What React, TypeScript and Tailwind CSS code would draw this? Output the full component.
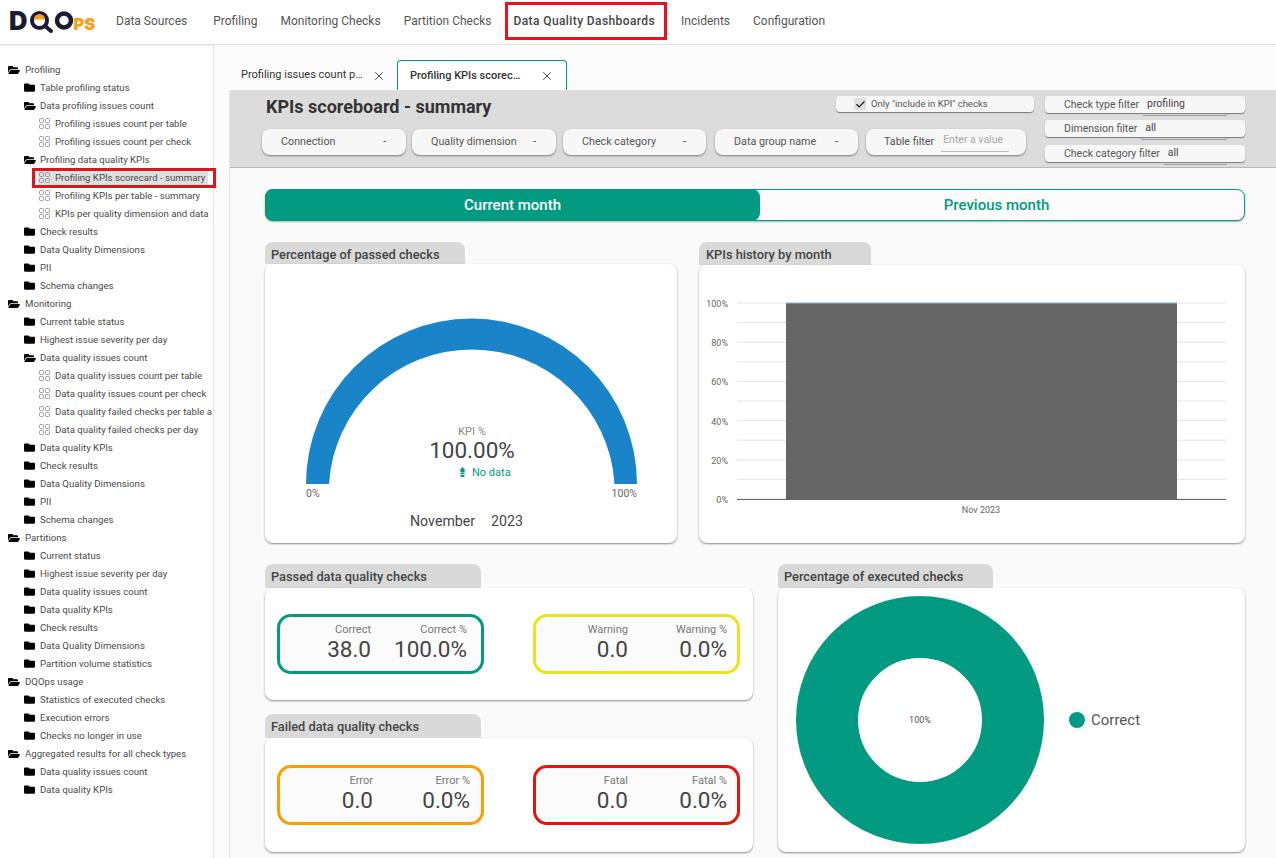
import { FaFolder, FaFolderOpen } from "react-icons/fa";
import { X, Check } from "lucide-react";

type Row = { label: string; level: 0 | 1 | 2; open?: boolean; active?: boolean };

const tree: Row[] = [
  { label: "Profiling", level: 0, open: true },
  { label: "Table profiling status", level: 1 },
  { label: "Data profiling issues count", level: 1, open: true },
  { label: "Profiling issues count per table", level: 2 },
  { label: "Profiling issues count per check", level: 2 },
  { label: "Profiling data quality KPIs", level: 1, open: true },
  { label: "Profiling KPIs scorecard - summary", level: 2, active: true },
  { label: "Profiling KPIs per table - summary", level: 2 },
  { label: "KPIs per quality dimension and data", level: 2 },
  { label: "Check results", level: 1 },
  { label: "Data Quality Dimensions", level: 1 },
  { label: "PII", level: 1 },
  { label: "Schema changes", level: 1 },
  { label: "Monitoring", level: 0, open: true },
  { label: "Current table status", level: 1 },
  { label: "Highest issue severity per day", level: 1 },
  { label: "Data quality issues count", level: 1, open: true },
  { label: "Data quality issues count per table", level: 2 },
  { label: "Data quality issues count per check", level: 2 },
  { label: "Data quality failed checks per table a", level: 2 },
  { label: "Data quality failed checks per day", level: 2 },
  { label: "Data quality KPIs", level: 1 },
  { label: "Check results", level: 1 },
  { label: "Data Quality Dimensions", level: 1 },
  { label: "PII", level: 1 },
  { label: "Schema changes", level: 1 },
  { label: "Partitions", level: 0, open: true },
  { label: "Current status", level: 1 },
  { label: "Highest issue severity per day", level: 1 },
  { label: "Data quality issues count", level: 1 },
  { label: "Data quality KPIs", level: 1 },
  { label: "Check results", level: 1 },
  { label: "Data Quality Dimensions", level: 1 },
  { label: "Partition volume statistics", level: 1 },
  { label: "DQOps usage", level: 0, open: true },
  { label: "Statistics of executed checks", level: 1 },
  { label: "Execution errors", level: 1 },
  { label: "Checks no longer in use", level: 1 },
  { label: "Aggregated results for all check types", level: 0, open: true },
  { label: "Data quality issues count", level: 1 },
  { label: "Data quality KPIs", level: 1 },
];

const navItems = [
  { label: "Data Sources", margin: "mr-[2px]" },
  { label: "Profiling", margin: "-mr-px" },
  { label: "Monitoring Checks", margin: "-mr-px" },
  { label: "Partition Checks", margin: "-mr-[3px]" },
  { label: "Data Quality Dashboards", margin: "", active: true },
  { label: "Incidents", margin: "-mr-px" },
  { label: "Configuration", margin: "" },
];

function Logo() {
  return (
    <svg width="90" height="32" viewBox="0 0 90 32" className="shrink-0">
      <text x="0" y="23.500" fontFamily="Inter, sans-serif" fontWeight="900" fontSize="25.500" fill="#1c1c30">D</text>
      <circle cx="30.500" cy="14.500" r="7.500" fill="#fff" stroke="#1c1c30" strokeWidth="4" />
      <path d="M25 13.500 a5.500 5.500 0 0 1 11 0 z" fill="#f9a01b" />
      <path d="M36 20 l6 5" stroke="#1c1c30" strokeWidth="4" strokeLinecap="round" />
      <circle cx="55" cy="14.500" r="7" fill="none" stroke="#1c1c30" strokeWidth="4.500" />
      <text x="64.500" y="24" fontFamily="Inter, sans-serif" fontWeight="900" fontSize="16.500" fill="#f9a01b">PS</text>
    </svg>
  );
}

function GridIcon() {
  return (
    <svg width="11" height="11" viewBox="0 0 11 11" className="shrink-0" fill="none" stroke="#8f8f8f" strokeWidth="0.9">
      <rect x="0.5" y="0.5" width="4" height="4" rx="1" />
      <rect x="6.5" y="0.5" width="4" height="4" rx="1" />
      <rect x="0.5" y="6.5" width="4" height="4" rx="1" />
      <rect x="6.5" y="6.5" width="4" height="4" rx="1" />
    </svg>
  );
}

function TreeRow({ row }: { row: Row }) {
  const indent = row.level === 0 ? "pl-2" : row.level === 1 ? "pl-6" : "pl-[39px]";
  return (
    <div className={`relative h-[18px] flex items-center whitespace-nowrap ${indent}`}>
      {row.active && <div className="absolute left-[38px] right-[5px] top-[1px] bottom-[1px] bg-[#e0e0e0]" />}
      <div className={`relative flex items-center ${row.level === 1 ? "gap-1" : "gap-[5px]"}`}>
        {row.level === 2 ? (
          <GridIcon />
        ) : row.open ? (
          <FaFolderOpen className="shrink-0 text-[12px] text-black" />
        ) : (
          <span className="w-[12px] shrink-0">
            <FaFolder className="text-[11px] text-black" />
          </span>
        )}
        <span className="text-[9.65px] text-[#4a4a4a]">{row.label}</span>
      </div>
      {row.active && <div className="absolute left-[32px] -right-[3px] -top-[1px] -bottom-[1px] z-10 border-[3px] border-[#e0131f]" />}
    </div>
  );
}

function Pill({ label, w }: { label: string; w: string }) {
  return (
    <div className={`${w} h-[26px] rounded-lg bg-[#f7f7f7] shadow-[0_1px_2px_rgba(0,0,0,0.45)] flex items-center justify-between pl-[19px] pr-[20px] text-[10.75px] text-[#555]`}>
      <span>{label}</span>
      <span className="text-[#333] text-[10px] leading-none">-</span>
    </div>
  );
}

function SmallFilter({ label, value }: { label: string; value: string }) {
  return (
    <div className="w-[200px] h-[17px] rounded-[4px] bg-[#f7f7f7] shadow-[0_1px_1px_rgba(0,0,0,0.45)] flex items-center pl-[19px] pr-[18px] text-[10.5px] text-[#555] whitespace-nowrap">
      <span>{label}</span>
      <span className="relative flex-1 self-stretch ml-1 pl-1 flex items-center -mt-px text-[#444]">
        {value}
        <span className="absolute left-0 right-0 -bottom-[3px] h-px bg-[#a0a0a0]" />
      </span>
    </div>
  );
}

function Label({ text, w, h, pad }: { text: string; w: string; h: string; pad: string }) {
  return (
    <div className={`${w} ${h} ${pad} rounded-t-lg bg-[#d9d9d9] flex items-center text-[12.8px] font-medium text-[#444] whitespace-nowrap`}>
      {text}
    </div>
  );
}

function Gauge() {
  return (
    <svg width="412" height="279" viewBox="0 0 412 279" className="block">
      <path d="M41 220 A165.5 165.5 0 0 1 372 220 L349.5 220 A143 143 0 0 0 64 220 Z" fill="#1a84c8" />
      <text x="207" y="171" textAnchor="middle" fontSize="11" fill="#888">KPI %</text>
      <text x="207" y="194" textAnchor="middle" fontSize="22.5" fill="#444">100.00%</text>
      <path d="M197.500 203 l3 3.500 h-1 v1.500 h-4 v-1.500 h-1 z M195.500 208.500 h4 v1.700 h-4 z M195.500 211 h4 v2 h-4 z" fill="#029a80" />
      <text x="207" y="212" fontSize="11" fill="#029a80">No data</text>
      <text x="41" y="233" fontSize="10.5" fill="#666">0%</text>
      <text x="372" y="233" textAnchor="end" fontSize="10.5" fill="#666">100%</text>
      <text y="262" fontSize="14.2" fill="#444">
        <tspan x="145">November</tspan>
        <tspan x="226">2023</tspan>
      </text>
    </svg>
  );
}

function History() {
  const ticks = [0, 20, 40, 60, 80, 100];
  const lines = [0, 1, 2, 3, 4, 5, 6, 7, 8, 9, 10];
  return (
    <svg width="546" height="278" viewBox="0 0 546 278" className="block">
      {lines.map((i) => (
        <line key={i} x1="38" x2="527" y1={38 + i * 19.6} y2={38 + i * 19.6} stroke="#e3e3e3" strokeWidth="1" />
      ))}
      <rect x="87" y="38" width="391" height="196" fill="#666666" />
      <line x1="87" x2="478" y1="38" y2="38" stroke="#7fc4d4" strokeWidth="1" />
      <line x1="38" x2="527" y1="234.500" y2="234.500" stroke="#666" strokeWidth="1" />
      {ticks.map((t, i) => (
        <text key={t} x="29" y={238 - i * 39.2} textAnchor="end" fontSize="9" fill="#666">{t}%</text>
      ))}
      <text x="282" y="248" textAnchor="middle" fontSize="9" fill="#666">Nov 2023</text>
    </svg>
  );
}

function Donut() {
  return (
    <svg width="248" height="248" viewBox="0 0 248 248" className="block shrink-0">
      <circle cx="124" cy="124" r="93" fill="none" stroke="#029a80" strokeWidth="62" />
      <text x="124" y="127" textAnchor="middle" fontSize="9" fill="#555">100%</text>
    </svg>
  );
}

type StatProps = { border: string; name: string; value: string; percent: string; col1: string; col2: string };

function Stat({ border, name, value, percent, col1, col2 }: StatProps) {
  return (
    <div className={`w-[207px] h-[60px] rounded-[14px] border-[3px] bg-[#fbfbfb] flex items-start pt-[6px] ${border}`}>
      <div className={`${col1} text-right`}>
        <div className="text-[11px] leading-[13px] text-[#777]">{name}</div>
        <div className="text-[22.5px] leading-[27px] text-[#444]">{value}</div>
      </div>
      <div className={`${col2} text-right`}>
        <div className="text-[11px] leading-[13px] text-[#777]">{name} %</div>
        <div className="text-[22.5px] leading-[27px] text-[#444]">{percent}</div>
      </div>
    </div>
  );
}

export default function App() {
  return (
    <div className="h-screen overflow-hidden bg-white font-['Roboto',sans-serif]">
      <header className="h-[45px] flex items-center border-b border-[#e2e2e2] shadow-[0_1px_2px_rgba(0,0,0,0.08)]">
        <div className="pl-[9px] w-[108px]">
          <Logo />
        </div>
        <nav className="flex items-center gap-2 -mt-[3px]">
          {navItems.map((item) =>
            item.active ? (
              <div key={item.label} className="h-[38px] pl-[6px] pr-[9px] -mr-[2px] flex items-center border-[3px] border-[#e8131f] text-[12px] font-medium text-[#444] tracking-[0.4px]">
                {item.label}
              </div>
            ) : (
              <div key={item.label} className={`px-2 text-[12px] text-[#555] ${item.margin}`}>
                {item.label}
              </div>
            )
          )}
        </nav>
      </header>

      <div className="flex h-[813px]">
        <aside className="w-[214px] shrink-0 border-r border-[#e2e2e2] pt-4">
          {tree.map((row, i) => (
            <TreeRow key={i} row={row} />
          ))}
        </aside>

        <main className="flex-1 min-w-0 flex flex-col bg-[#fcfcfc] pt-[15px]">
          <div className="h-[30px] flex items-stretch pl-[15px]">
            <div className="w-[168px] flex items-center pl-3 pt-px text-[11px] text-[#333]">
              <span className="w-[118px] whitespace-nowrap">Profiling issues count p…</span>
              <X size={14} strokeWidth={1.5} className="ml-[13px] text-[#333]" />
            </div>
            <div className="w-[170px] flex items-center pl-3 pt-px rounded-t border border-b-0 border-[#029a80] bg-white text-[11px] font-medium text-[#333]">
              <span className="w-[117px] whitespace-nowrap">Profiling KPIs scorec…</span>
              <X size={14} strokeWidth={1.5} className="ml-[13px] text-[#333]" />
            </div>
          </div>

          <div className="flex-1 ml-[15px] border-l border-[#e6e6e6] bg-[#fafafa]">
            <div className="h-[78px] bg-[#dcdcdc] border-b border-[#b8b8b8] flex pl-[32px] pr-[31px]">
              <div className="w-[771px]">
                <div className="h-[39px] pt-[6px] flex">
                  <h1 className="pl-1 text-[18px] leading-[22px] font-bold text-[#333]">KPIs scoreboard - summary</h1>
                  <div className="ml-auto mr-[-1px] w-[198px] h-[16px] rounded-[4px] bg-[#f7f7f7] shadow-[0_1px_1px_rgba(0,0,0,0.45)] flex items-center pl-[18px] gap-[5px] text-[9.5px] text-[#555]">
                    <span className="w-[12px] h-[12px] bg-[#e0e0e0] flex items-center justify-center">
                      <Check size={11} strokeWidth={2.5} className="text-[#111]" />
                    </span>
                    Only "include in KPI" checks
                  </div>
                </div>
                <div className="flex">
                  <Pill label="Connection" w="w-[144px]" />
                  <Pill label="Quality dimension" w="w-[144px] ml-[6px]" />
                  <Pill label="Check category" w="w-[143px] ml-[7px]" />
                  <Pill label="Data group name" w="w-[143px] ml-[9px]" />
                  <div className="w-[160px] ml-2 h-[26px] rounded-lg bg-[#f7f7f7] shadow-[0_1px_2px_rgba(0,0,0,0.45)] flex items-center pl-[18px] text-[10.75px] text-[#555]">
                    <span>Table filter</span>
                    <span className="ml-[7px] w-[68px] pb-[3px] border-b border-[#bbb] text-[#aaa] text-[10.5px] pl-[2px] whitespace-nowrap">Enter a value</span>
                  </div>
                </div>
              </div>
              <div className="ml-auto pt-[6px] flex flex-col">
                <SmallFilter label="Check type filter" value="profiling" />
                <div className="h-[7px]" />
                <SmallFilter label="Dimension filter" value="all" />
                <div className="h-2" />
                <SmallFilter label="Check category filter" value="all" />
              </div>
            </div>

            <div className="pl-[35px] pr-[31px] pt-[21px]">
              <div className="h-[32px] flex rounded-lg border border-[#029a80] bg-[#fbfbfb] shadow-[0_1px_2px_rgba(0,0,0,0.3)] text-[15px] font-medium">
                <div className="w-[495px] -m-px rounded-lg bg-[#029a80] text-white flex items-center justify-center">Current month</div>
                <div className="flex-1 pr-[10px] text-[#029a80] flex items-center justify-center">Previous month</div>
              </div>

              <div className="mt-[21px] flex gap-[22px]">
                <div className="w-[412px]">
                  <Label text="Percentage of passed checks" w="w-[200px]" h="h-[22px] pt-[3px]" pad="px-[6px]" />
                  <div className="h-[279px] rounded-lg bg-white shadow-[0_1px_2px_rgba(0,0,0,0.45)]">
                    <Gauge />
                  </div>
                </div>
                <div className="w-[546px]">
                  <Label text="KPIs history by month" w="w-[172px]" h="h-[23px] pt-[2px]" pad="px-[7px]" />
                  <div className="h-[278px] rounded-lg bg-white shadow-[0_1px_2px_rgba(0,0,0,0.45)]">
                    <History />
                  </div>
                </div>
              </div>

              <div className="mt-[21px] flex gap-[25px]">
                <div className="w-[488px]">
                  <Label text="Passed data quality checks" w="w-[216px]" h="h-[24px] pt-[2px]" pad="px-[6px]" />
                  <div className="h-[112px] rounded-lg bg-white shadow-[0_1px_2px_rgba(0,0,0,0.45)] pl-3 pr-[13px] pt-[26px] flex justify-between">
                    <Stat border="border-[#029a80]" name="Correct" value="38.0" percent="100.0%" col1="w-[91px]" col2="w-[96px]" />
                    <Stat border="border-[#ede21b]" name="Warning" value="0.0" percent="0.0%" col1="w-[92px]" col2="w-[99px]" />
                  </div>
                  <div className="mt-[14px]">
                    <Label text="Failed data quality checks" w="w-[216px]" h="h-[24px] pt-[2px]" pad="px-[6px]" />
                    <div className="h-[114px] rounded-lg bg-white shadow-[0_1px_2px_rgba(0,0,0,0.45)] pl-3 pr-[13px] pt-[27px] flex justify-between">
                      <Stat border="border-[#ff9d00]" name="Error" value="0.0" percent="0.0%" col1="w-[93px]" col2="w-[97px]" />
                      <Stat border="border-[#e2160c]" name="Fatal" value="0.0" percent="0.0%" col1="w-[92px]" col2="w-[99px]" />
                    </div>
                  </div>
                </div>
                <div className="w-[467px]">
                  <Label text="Percentage of executed checks" w="w-[215px]" h="h-[24px] pt-[2px]" pad="px-[6px]" />
                  <div className="h-[264px] rounded-lg bg-white shadow-[0_1px_2px_rgba(0,0,0,0.45)] pl-[18px] flex items-center">
                    <Donut />
                    <div className="ml-[25px] flex items-center gap-[6px] text-[15px] text-[#555]">
                      <span className="w-4 h-4 rounded-full bg-[#029a80]" />
                      Correct
                    </div>
                  </div>
                </div>
              </div>
            </div>
          </div>
        </main>
      </div>
    </div>
  );
}
